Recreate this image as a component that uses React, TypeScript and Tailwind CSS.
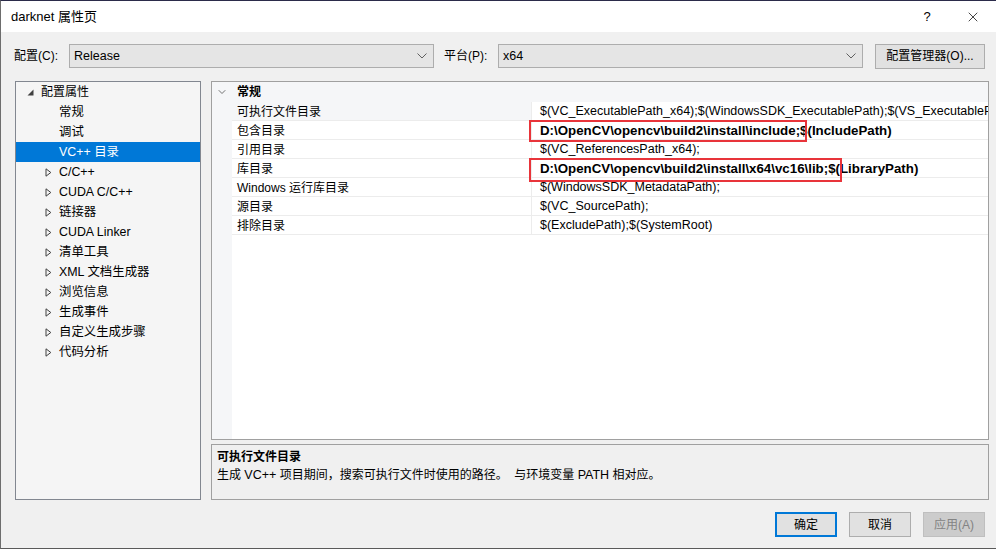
import { X, ChevronDown } from "lucide-react";

const font = { fontFamily: '"Liberation Sans", "Noto Sans CJK SC", sans-serif' };

const treeItems = [
  { label: "常规", kind: "leaf" },
  { label: "调试", kind: "leaf" },
  { label: "VC++ 目录", kind: "leaf", selected: true },
  { label: "C/C++", kind: "node" },
  { label: "CUDA C/C++", kind: "node" },
  { label: "链接器", kind: "node" },
  { label: "CUDA Linker", kind: "node" },
  { label: "清单工具", kind: "node" },
  { label: "XML 文档生成器", kind: "node" },
  { label: "浏览信息", kind: "node" },
  { label: "生成事件", kind: "node" },
  { label: "自定义生成步骤", kind: "node" },
  { label: "代码分析", kind: "node" },
];

const rows = [
  { name: "可执行文件目录", value: "$(VC_ExecutablePath_x64);$(WindowsSDK_ExecutablePath);$(VS_ExecutablePath);$(MSBuild_ExecutablePath)", active: true },
  { name: "包含目录", value: "D:\\OpenCV\\opencv\\build2\\install\\include;$(IncludePath)", bold: true },
  { name: "引用目录", value: "$(VC_ReferencesPath_x64);" },
  { name: "库目录", value: "D:\\OpenCV\\opencv\\build2\\install\\x64\\vc16\\lib;$(LibraryPath)", bold: true },
  { name: "Windows 运行库目录", value: "$(WindowsSDK_MetadataPath);" },
  { name: "源目录", value: "$(VC_SourcePath);" },
  { name: "排除目录", value: "$(ExcludePath);$(SystemRoot)" },
];

function ExpandArrow() {
  return (
    <svg width="7" height="9" viewBox="0 0 7 9" className="shrink-0">
      <path d="M1 0.8 L5.8 4.5 L1 8.2 Z" fill="none" stroke="#404040" strokeWidth="1" />
    </svg>
  );
}

function Select({ value }: { value: string }) {
  return (
    <div className="flex h-[24px] w-[365px] items-center justify-between border border-[#adadad] bg-[#e5e5e5] pl-[4px] pr-[6px]">
      <span className="text-[12.5px]">{value}</span>
      <svg width="10" height="6" viewBox="0 0 10 6">
        <path d="M0.5 0.5 L5 5 L9.5 0.5" fill="none" stroke="#606060" strokeWidth="1" />
      </svg>
    </div>
  );
}

export default function App() {
  return (
    <div
      style={font}
      className="flex h-[549px] w-[996px] flex-col overflow-hidden border-t border-l border-b border-t-[#2b2b4a] border-l-[#6d6d6d] border-b-[#5a5a5a] bg-[#f0f0f0] text-[12px] text-black"
    >
      {/* Title bar */}
      <div className="flex h-[31px] shrink-0 items-center justify-between bg-white pl-[10px]">
        <span className="text-[13px]">darknet 属性页</span>
        <div className="flex h-full items-center">
          <span className="w-[46px] text-center text-[13px]">?</span>
          <div className="flex w-[46px] justify-center">
            <X size={16} strokeWidth={1.1} />
          </div>
        </div>
      </div>

      {/* Configuration toolbar */}
      <div className="flex h-[43px] shrink-0 items-center pl-[13px] pt-[5px]">
        <span className="w-[55px]">配置(C):</span>
        <Select value="Release" />
        <span className="ml-[10px] w-[54px]">平台(P):</span>
        <Select value="x64" />
        <button className="ml-[12px] h-[25px] w-[110px] border border-[#adadad] bg-[#e1e1e1] text-center">
          配置管理器(O)...
        </button>
      </div>

      {/* Main area */}
      <div className="mt-[6px] flex h-[419px] shrink-0 pl-[14px]">
        {/* Tree */}
        <div className="w-[186px] border border-[#828790] bg-[#f5f5f5]">
          <div className="flex h-[20px] items-center pl-[11px]">
            <svg width="7" height="7" viewBox="0 0 7 7" className="shrink-0">
              <path d="M6.5 0.5 L6.5 6.5 L0.5 6.5 Z" fill="#404040" />
            </svg>
            <span className="ml-[7px]">配置属性</span>
          </div>
          {treeItems.map((item) => (
            <div
              key={item.label}
              className={`flex h-[20px] items-center pl-[29px] ${item.selected ? "bg-[#0078d7] text-white" : ""}`}
            >
              <span className="flex w-[14px] items-center">{item.kind === "node" && <ExpandArrow />}</span>
              <span className="text-[12.4px]">{item.label}</span>
            </div>
          ))}
        </div>

        {/* Right column */}
        <div className="ml-[10px] flex w-[778px] flex-col">
          <div className="relative flex h-[359px] flex-col overflow-hidden border border-[#a0a0a0] bg-white">
            <div className="flex h-[20px] shrink-0 items-center bg-[#f5f6f8]">
              <span className="flex w-[20px] justify-center">
                <ChevronDown size={12} strokeWidth={1.6} className="text-[#505050]" />
              </span>
              <span className="pl-[5px] font-bold">常规</span>
            </div>
            <div className="flex flex-1">
              <div className="w-[20px] shrink-0 bg-[#f5f6f8]" />
              <div className="flex min-w-0 flex-1 flex-col">
                {rows.map((row) => (
                  <div key={row.name} className="flex h-[19px] shrink-0">
                    <div
                      className={`flex w-[300px] shrink-0 items-center border-r border-b border-[#ececec] pl-[5px] pt-[1px] ${row.active ? "bg-[#f5f6f8]" : ""}`}
                    >
                      {row.name}
                    </div>
                    <div className="flex min-w-0 flex-1 items-center overflow-hidden border-b border-[#ececec] pl-[8px] pt-[1px]">
                      <span className={`whitespace-nowrap ${row.bold ? "text-[13.3px] font-bold" : "text-[12.5px]"}`}>
                        {row.value}
                      </span>
                    </div>
                  </div>
                ))}
              </div>
            </div>

            {/* Annotation boxes */}
            <div className="pointer-events-none absolute left-[317px] top-[38px] h-[22px] w-[278px] border-2 border-[#e8343a]" />
            <div className="pointer-events-none absolute left-[317px] top-[76px] h-[24px] w-[313px] border-2 border-[#e8343a]" />
          </div>

          {/* Description */}
          <div className="mt-[4px] h-[56px] border border-[#a0a0a0] bg-[#f0f0f0] pl-[5px] pt-[3px]">
            <div className="h-[18px] font-bold leading-[18px]">可执行文件目录</div>
            <div className="h-[18px] whitespace-pre leading-[18px]">
              生成 <span className="text-[12.5px]">VC++</span> 项目期间，搜索可执行文件时使用的路径。  与环境变量 <span className="text-[12.5px]">PATH</span> 相对应。
            </div>
          </div>
        </div>
      </div>

      {/* Footer buttons */}
      <div className="flex flex-1 items-start justify-end gap-[12px] pr-[11px] pt-[12px]">
        <button className="h-[25px] w-[62px] border-2 border-[#0078d7] bg-[#e1e1e1]">确定</button>
        <button className="h-[25px] w-[62px] border border-[#adadad] bg-[#e1e1e1]">取消</button>
        <button className="h-[25px] w-[62px] border border-[#bfbfbf] bg-[#cccccc] text-[#838383]">应用(A)</button>
      </div>
    </div>
  );
}
